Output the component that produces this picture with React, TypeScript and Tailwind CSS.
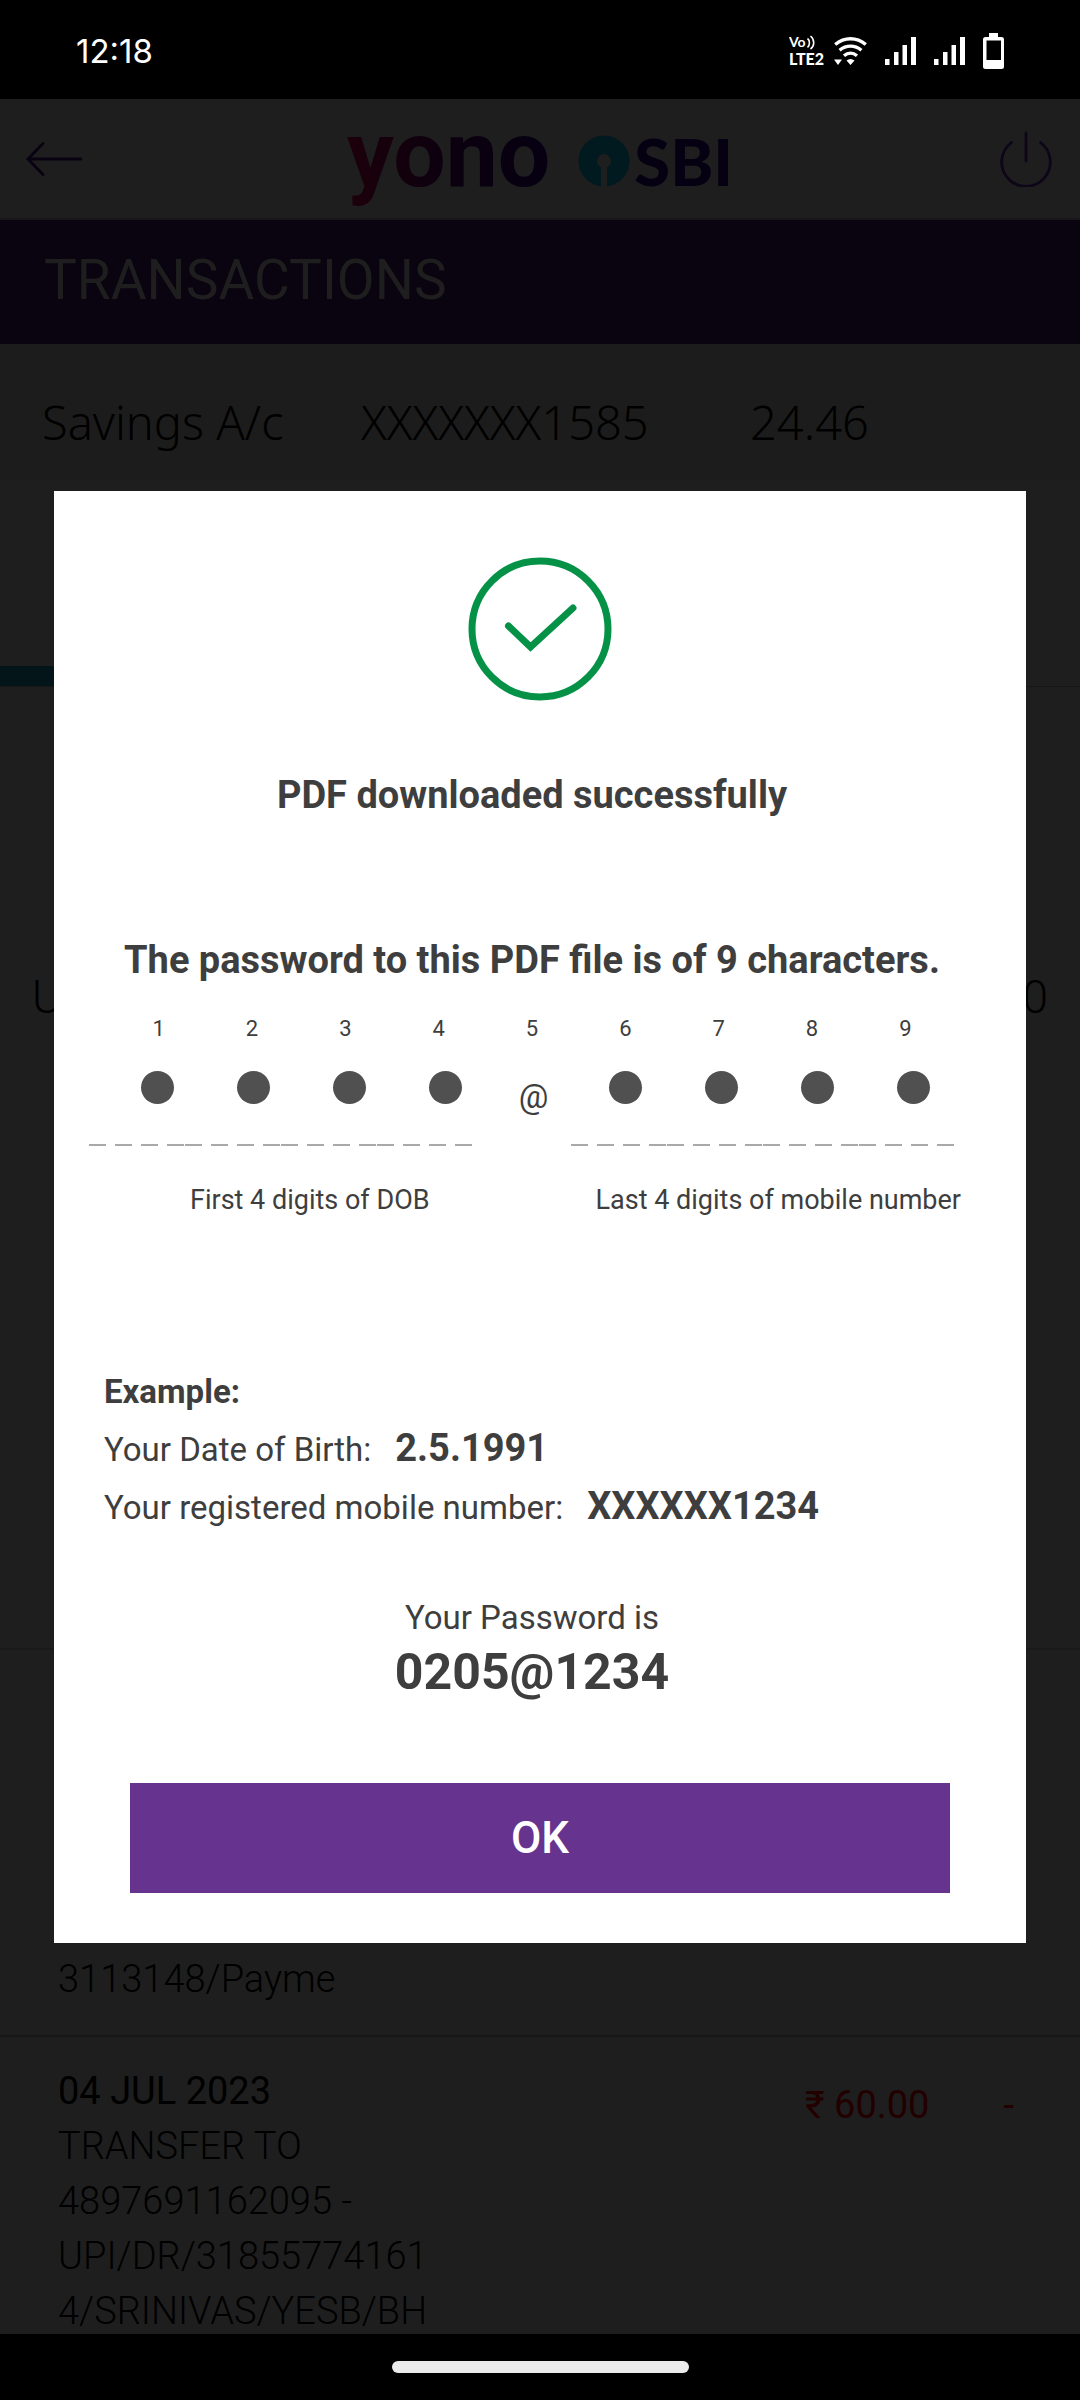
import React from "react";

const SLOTS_BEFORE = [1, 2, 3, 4];
const SLOTS_AFTER = [6, 7, 8, 9];

function VolteIcon() {
  return (
    <svg width="37" height="36" viewBox="0 -4 37 36" fill="none" aria-label="VoLTE 2">
      <text x="0" y="10" fontSize="14" fontWeight="700" fontFamily="Lato, sans-serif" fill="#fff">Vo</text>
      <path d="M18.500 1.500c2.600 2 2.600 6.500 0 9M21.500-1c4.300 3.500 4.300 10 0 13" stroke="#fff" strokeWidth="1.600" />
      <text x="0" y="28" fontSize="16" fontWeight="900" fontFamily="Lato, sans-serif" fill="#fff">LTE2</text>
    </svg>
  );
}

function WifiIcon() {
  return (
    <svg width="33" height="28" viewBox="0 0 33 28" fill="none" aria-label="Wi-Fi">
      <path d="M1.200 7.500C10.500-.2 22.500-.2 31.800 7.500" stroke="#fff" strokeWidth="3.400" />
      <path d="M5.600 13.200c6.600-5.400 15.200-5.400 21.800 0" stroke="#fff" strokeWidth="3.400" />
      <path d="M10 18.700c4-3.300 9-3.300 13 0" stroke="#fff" strokeWidth="3.400" />
      <path d="M0 22.500h8L4 28z M12.500 23.500q4-3 8 0l-4 4.500z" fill="#fff" />
    </svg>
  );
}

function SignalIcon() {
  return (
    <svg width="31" height="28" viewBox="0 0 31 28" fill="#fff" aria-label="Signal">
      <path d="M0 22h4.500v6H0zM9 15h4.500v13H9zM17.500 8h4.500v20h-4.500zM26 0h5v28h-5z" />
    </svg>
  );
}

function BatteryIcon() {
  return (
    <svg width="21" height="36" viewBox="0 0 21 36" aria-label="Battery">
      <path
        fill="#fff"
        fillRule="evenodd"
        d="M6 0h9v4h3.500a2.500 2.500 0 0 1 2.500 2.500v27a2.500 2.500 0 0 1-2.500 2.500h-16a2.500 2.500 0 0 1-2.500-2.500v-27a2.500 2.500 0 0 1 2.500-2.500h3.500zM3.500 7.500v19.500h14.500v-19.500z"
      />
    </svg>
  );
}

function StatusBar() {
  return (
    <div className="flex h-[99px] shrink-0 items-center bg-black px-[76px] pt-[2px] text-white">
      <time className="flex-1 font-['Inter',sans-serif] text-[33px] leading-10">12:18</time>
      <div className="flex items-center gap-[18px]">
        <div className="flex items-center gap-2">
          <VolteIcon />
          <WifiIcon />
        </div>
        <SignalIcon />
        <SignalIcon />
        <BatteryIcon />
      </div>
    </div>
  );
}

function Header() {
  return (
    <header className="flex h-[121px] items-center justify-between border-b-2 border-[#19171b] bg-[#1e1e1e] px-[26px]">
      <button type="button" aria-label="Back" className="w-[56px]">
        <svg width="56" height="34" viewBox="0 0 56 34" fill="none" stroke="#090212" strokeWidth="2.800" strokeLinecap="round">
          <path d="M17 1.500L2 17l15 15.500M2 17h53" />
        </svg>
      </button>
      <div className="flex h-full items-center">
        <span className="bg-linear-to-r from-[#1d000a] via-[#0c000f] to-[#060012] bg-clip-text pb-2 text-[93px] leading-[100px] font-bold text-transparent">
          yono
        </span>
        <svg className="mt-1 mr-1 ml-7" width="52" height="52" viewBox="0 0 52 52" aria-label="SBI logo">
          <circle cx="26" cy="26" r="25.500" fill="#001a20" />
          <circle cx="26" cy="26" r="7" fill="#1e1e1e" />
          <path d="M23 28h6v24h-6z" fill="#1e1e1e" />
        </svg>
        <span className="mt-1 font-['Lato',sans-serif] text-[65px] leading-[68px] font-black text-[#060013]">SBI</span>
      </div>
      <button type="button" aria-label="Log out" className="w-[56px]">
        <svg width="56" height="56" viewBox="0 0 56 56" fill="none" stroke="#0d0518" strokeWidth="2.800" strokeLinecap="round">
          <path d="M28 2v28M13.500 11.500a24.300 24.300 0 1 0 29 0" />
        </svg>
      </button>
    </header>
  );
}

function Statement() {
  return (
    <main className="bg-[#1e1e1e]">
      <Header />
      <h1 className="flex h-[124px] items-center bg-[#0a0310] px-11 pb-1 text-[55px] leading-[64px] text-[#1e1e1e]">
        TRANSACTIONS
      </h1>
      <div className="grid h-[136px] grid-cols-[319px_389px_1fr] items-center bg-[#1c1c1c] px-[42px] pt-5 font-['Noto_Sans',sans-serif] text-[47px] leading-[56px] font-light text-black">
        <span>Savings A/c</span>
        <span>XXXXXXX1585</span>
        <span>24.46</span>
      </div>
      <div className="mt-[186px] border-b border-[#171717]">
        <div className="h-5 w-1/2 bg-[#04151a]" />
      </div>
      <div className="flex h-[963px] items-start justify-between border-b-2 border-[#191919] px-8 pt-[282px] text-[46px] leading-[56px] font-light text-black">
        <span>U</span>
        <span>0</span>
      </div>
      <article className="border-b-2 border-[#171717] px-[58px] pt-[302px] pb-7 text-[38px] leading-[55px] font-light text-black">
        <p>3113148/Payme</p>
      </article>
      <article className="flex px-[58px] pt-[27px] text-[38px] leading-[55px] text-black">
        <div className="w-[380px] font-light">
          <p className="font-normal">04 JUL 2023</p>
          <p>TRANSFER TO</p>
          <p>4897691162095 -</p>
          <p>UPI/DR/31855774161</p>
          <p>4/SRINIVAS/YESB/BH</p>
        </div>
        <div className="flex flex-1 justify-end gap-[74px] pt-[14px] text-[#220000]">
          <span>₹ 60.00</span>
          <span className="pr-2">-</span>
        </div>
      </article>
    </main>
  );
}

function Dot() {
  return (
    <span className="flex flex-1 justify-center">
      <span className="size-[33px] rounded-full bg-[#505050]" />
    </span>
  );
}

function Dashes() {
  return (
    <div className="flex w-[384px]">
      {SLOTS_BEFORE.map((slot) => (
        <div key={slot} className="flex w-24 gap-[9px]">
          <span className="h-[2px] w-[17px] bg-[#a9a9a9]" />
          <span className="h-[2px] w-[17px] bg-[#a9a9a9]" />
          <span className="h-[2px] w-[17px] bg-[#a9a9a9]" />
          <span className="h-[2px] w-[17px] bg-[#a9a9a9]" />
        </div>
      ))}
    </div>
  );
}

function PasswordDialog() {
  return (
    <section role="dialog" aria-modal="true" aria-labelledby="dialog-title" className="w-[90%] bg-white pt-[66px] pb-[50px] text-[#3e3e3e]">
      <svg className="mx-auto block" width="144" height="144" viewBox="0 0 144 144" fill="none" stroke="#059247" strokeWidth="7">
        <circle cx="72" cy="72" r="68" />
        <path d="M40.500 69L62.500 90L105 51" strokeLinecap="round" />
      </svg>
      <div className="pr-4 text-center text-[38px] leading-[48px] font-bold">
        <h2 id="dialog-title" className="mt-[70px]">PDF downloaded successfully</h2>
        <p className="mt-[117px]">The password to this PDF file is of 9 characters.</p>
      </div>
      <div className="mt-8 grid grid-cols-9 pr-[74px] pl-[58px] text-center text-[22px] leading-[26px]">
        {[...SLOTS_BEFORE, 5, ...SLOTS_AFTER].map((n) => (
          <span key={n}>{n}</span>
        ))}
      </div>
      <div className="mt-[29px] flex pr-[64px] pl-[55px]">
        {SLOTS_BEFORE.map((n) => (
          <Dot key={n} />
        ))}
        <span className="w-[84px] pr-1 text-center text-[33px] leading-[52px]">@</span>
        {SLOTS_AFTER.map((n) => (
          <Dot key={n} />
        ))}
      </div>
      <div className="mt-[21px] flex justify-between pr-[71px] pl-[35px]">
        <Dashes />
        <Dashes />
      </div>
      <div className="mt-[38px] flex justify-between pr-[65px] pl-[136px] text-[27px] leading-8">
        <span>First 4 digits of DOB</span>
        <span>Last 4 digits of mobile number</span>
      </div>
      <div className="mt-[148px] pl-[50px] text-[33px] leading-[56px]">
        <p className="font-bold">Example:</p>
        <p className="flex items-baseline gap-6">
          Your Date of Birth: <b className="text-[38px]">2.5.1991</b>
        </p>
        <p className="flex items-baseline gap-6">
          Your registered mobile number: <b className="text-[38px]">XXXXXX1234</b>
        </p>
      </div>
      <div className="mt-[58px] pr-4 text-center">
        <p className="text-[33px] leading-[48px]">Your Password is</p>
        <p className="text-[50px] leading-[60px] font-bold">0205@1234</p>
      </div>
      <div className="mt-[81px] px-[76px]">
        <button type="button" className="block h-[110px] w-full bg-[#66338f] text-[44px] font-medium text-white">
          OK
        </button>
      </div>
    </section>
  );
}

export default function App() {
  return (
    <div className="flex h-screen flex-col bg-black font-['Roboto',sans-serif]">
      <StatusBar />
      <div className="relative min-h-0 flex-1 overflow-hidden bg-[#1e1e1e]">
        <Statement />
        <div className="absolute inset-0 flex items-center justify-center">
          <PasswordDialog />
        </div>
      </div>
      <nav className="flex h-[66px] shrink-0 items-center justify-center bg-black">
        <button type="button" aria-label="Home" className="h-3 w-[297px] rounded-full bg-[#ebebeb]" />
      </nav>
    </div>
  );
}
